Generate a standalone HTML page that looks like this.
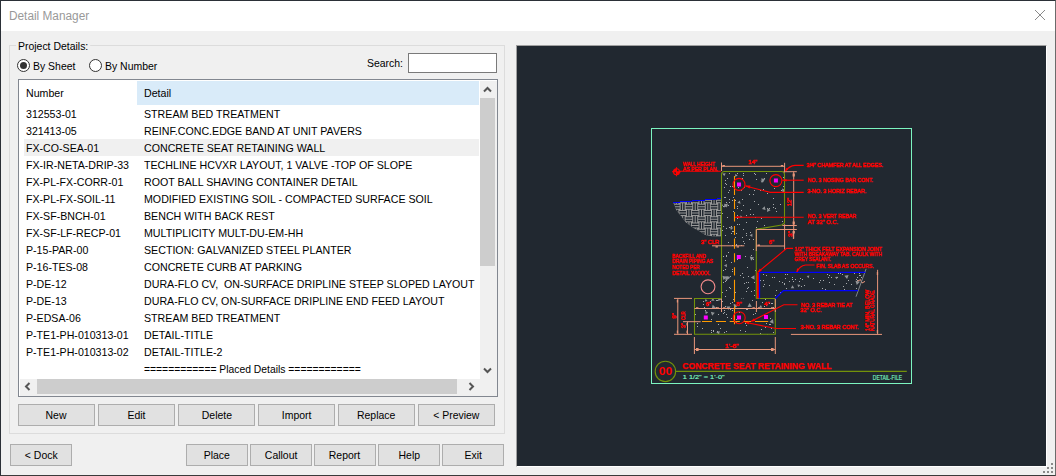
<!DOCTYPE html>
<html><head><meta charset="utf-8">
<style>
html,body{margin:0;padding:0;}
body{width:1056px;height:476px;overflow:hidden;background:#f0f0f0;position:relative;font-family:"Liberation Sans",sans-serif;font-size:11px;color:#000;}
.abs{position:absolute;}
#win{position:absolute;left:0;top:0;width:1054px;height:474px;border-left:1px solid #2b3037;border-top:1px solid #2b3037;border-right:1px solid #6b6b6b;border-bottom:1px solid #3a3a3a;background:#f0f0f0;}
#title{position:absolute;left:1px;top:1px;width:1054px;height:30px;background:#fff;}
#title span{position:absolute;left:8px;top:8px;font-size:12px;color:#999;display:inline-block;transform:scaleX(.985);transform-origin:0 0;white-space:nowrap;}
#grp{position:absolute;left:9px;top:45px;width:494px;height:387px;border:1px solid #dcdcdc;}
#legend{position:absolute;left:16px;top:39.5px;background:#f0f0f0;padding:0 2px;line-height:13px;transform:scale(.95,1.05);transform-origin:2px 10px;}
.radio{position:absolute;width:11px;height:11px;border:1px solid #333;border-radius:50%;background:#fff;}
.radio.on::after{content:"";position:absolute;left:2px;top:2px;width:7px;height:7px;border-radius:50%;background:#333;}
.lbl{position:absolute;line-height:13px;white-space:nowrap;transform:scale(.95,1.05);transform-origin:0 10px;}
#search{position:absolute;left:408px;top:53px;width:87px;height:18px;border:1px solid #7a7a7a;background:#fff;}
#list{position:absolute;left:18px;top:79px;width:478px;height:316px;border:1px solid #828790;background:#fff;overflow:hidden;}
#hdr2{position:absolute;left:118px;top:1px;width:342px;height:24px;background:#d9ebf9;}
.row{position:absolute;left:5px;width:455px;height:17px;line-height:17px;white-space:nowrap;}
.row.sel{background:#f0f0f0;}
.row i{font-style:normal;position:absolute;left:2px;top:1px;transform:scale(.965,1.05);transform-origin:0 12.5px;}
.row b{font-weight:normal;position:absolute;left:119.5px;top:1px;transform:scale(.968,1.05);transform-origin:0 12.5px;}
.btn{position:absolute;height:20px;border:1px solid #adadad;background:#e1e1e1;text-align:center;line-height:21px;}
.btn span{display:inline-block;transform:scale(.95,1.05);transform-origin:50% 14.5px;}
#prev{position:absolute;left:516px;top:45px;width:529px;height:420px;background:#212830;border-left:1px solid #a0a0a0;border-top:1px solid #a0a0a0;border-right:1px solid #fff;border-bottom:1px solid #fff;}
</style></head><body>
<div id="win"></div>
<div id="title"><span>Detail Manager</span></div>
<svg class="abs" style="left:1034px;top:9px" width="12" height="12" viewBox="0 0 12 12"><path d="M1 1L11 11M11 1L1 11" stroke="#8a8a8a" stroke-width="1" fill="none"/></svg>
<div id="grp"></div>
<div id="legend">Project Details:</div>
<div class="radio on" style="left:17px;top:59px"></div><div class="lbl" style="left:33px;top:60px">By Sheet</div>
<div class="radio" style="left:89px;top:59px"></div><div class="lbl" style="left:105px;top:60px">By Number</div>
<div class="lbl" style="left:367px;top:57px">Search:</div>
<div id="search"></div>
<div id="list">
<div id="hdr2"></div>
<div class="row" style="top:4px"><i>Number</i><b>Detail</b></div>
<div class="row" style="top:25px"><i>312553-01</i><b>STREAM BED TREATMENT</b></div>
<div class="row" style="top:42px"><i>321413-05</i><b>REINF.CONC.EDGE BAND AT UNIT PAVERS</b></div>
<div class="row sel" style="top:59px"><i>FX-CO-SEA-01</i><b>CONCRETE SEAT RETAINING WALL</b></div>
<div class="row" style="top:76px"><i>FX-IR-NETA-DRIP-33</i><b>TECHLINE HCVXR LAYOUT, 1 VALVE -TOP OF SLOPE</b></div>
<div class="row" style="top:93px"><i>FX-PL-FX-CORR-01</i><b>ROOT BALL SHAVING CONTAINER DETAIL</b></div>
<div class="row" style="top:110px"><i>FX-PL-FX-SOIL-11</i><b>MODIFIED EXISTING SOIL - COMPACTED SURFACE SOIL</b></div>
<div class="row" style="top:127px"><i>FX-SF-BNCH-01</i><b>BENCH WITH BACK REST</b></div>
<div class="row" style="top:144px"><i>FX-SF-LF-RECP-01</i><b>MULTIPLICITY MULT-DU-EM-HH</b></div>
<div class="row" style="top:161px"><i>P-15-PAR-00</i><b>SECTION: GALVANIZED STEEL PLANTER</b></div>
<div class="row" style="top:178px"><i>P-16-TES-08</i><b>CONCRETE CURB AT PARKING</b></div>
<div class="row" style="top:195px"><i>P-DE-12</i><b>DURA-FLO CV,&nbsp; ON-SURFACE DRIPLINE STEEP SLOPED LAYOUT</b></div>
<div class="row" style="top:212px"><i>P-DE-13</i><b>DURA-FLO CV, ON-SURFACE DRIPLINE END FEED LAYOUT</b></div>
<div class="row" style="top:229px"><i>P-EDSA-06</i><b>STREAM BED TREATMENT</b></div>
<div class="row" style="top:246px"><i>P-TE1-PH-010313-01</i><b>DETAIL-TITLE</b></div>
<div class="row" style="top:263px"><i>P-TE1-PH-010313-02</i><b>DETAIL-TITLE-2</b></div>
<div class="row" style="top:280px"><i></i><b style="transform:scale(.94,1.05)">============ Placed Details ============</b></div>
<div class="abs" style="left:461px;top:1px;width:17px;height:298px;background:#f0f0f0"></div>
<div class="abs" style="left:461px;top:18px;width:15px;height:168px;background:#cdcdcd"></div>
<div class="abs" style="left:1px;top:299px;width:477px;height:17px;background:#f0f0f0"></div>
<div class="abs" style="left:18px;top:299px;width:420px;height:15px;background:#cdcdcd"></div>
<svg class="abs" style="left:460px;top:0px" width="17" height="17"><path d="M5 11.5L8.5 8L12 11.5" stroke="#555" stroke-width="2" fill="none"/></svg>
<svg class="abs" style="left:460px;top:281px" width="17" height="17"><path d="M5 7.5L8.5 11L12 7.5" stroke="#555" stroke-width="2" fill="none"/></svg>
<svg class="abs" style="left:0px;top:298px" width="17" height="17"><path d="M10.5 5L7 8.5L10.5 12" stroke="#555" stroke-width="2" fill="none"/></svg>
<svg class="abs" style="left:443px;top:298px" width="17" height="17"><path d="M7.5 5L11 8.5L7.5 12" stroke="#555" stroke-width="2" fill="none"/></svg>
</div>
<div class="btn" style="left:18px;top:404px;width:75px"><span>New</span></div>
<div class="btn" style="left:98px;top:404px;width:75px"><span>Edit</span></div>
<div class="btn" style="left:178px;top:404px;width:75px"><span>Delete</span></div>
<div class="btn" style="left:258px;top:404px;width:75px"><span>Import</span></div>
<div class="btn" style="left:338px;top:404px;width:75px"><span>Replace</span></div>
<div class="btn" style="left:418px;top:404px;width:75px"><span>&lt; Preview</span></div>
<div class="btn" style="left:10px;top:444px;width:60px"><span>&lt; Dock</span></div>
<div class="btn" style="left:186px;top:444px;width:60px"><span>Place</span></div>
<div class="btn" style="left:250px;top:444px;width:60px"><span>Callout</span></div>
<div class="btn" style="left:314px;top:444px;width:60px"><span>Report</span></div>
<div class="btn" style="left:378px;top:444px;width:60px"><span>Help</span></div>
<div class="btn" style="left:442px;top:444px;width:60px"><span>Exit</span></div>
<svg class="abs" style="left:1040px;top:460px" width="14" height="14"><path d="M11 3h2v2h-2zM7 7h2v2h-2zM11 7h2v2h-2zM3 11h2v2h-2zM7 11h2v2h-2zM11 11h2v2h-2z" fill="#8a8a8a" shape-rendering="crispEdges"/></svg>
<div id="prev"></div>
<!--CAD-->
<svg id="cad" class="abs" style="left:516px;top:45px" width="530" height="421" viewBox="516 45 530 421" font-family="&quot;Liberation Sans&quot;,sans-serif">
<defs>
<clipPath id="cw"><path d="M721.5 171.5H784.5V223L781.7 225L756.3 229.3V298.5H721.5Z"/></clipPath>
<clipPath id="cf"><path d="M694.5 298.5H775.3V334.3H694.5Z"/></clipPath>
<clipPath id="cs"><path d="M759.5 272.4H865.2L858.5 290.6H783.5L775.3 298.5H759.5Z"/></clipPath>
</defs>
<rect x="651.5" y="128.5" width="260" height="255" fill="none" stroke="#7cf5c0" stroke-width="1"/>
<clipPath id="ch"><path d="M673.3 202.8L674.7 206L676 209.4L678 212.4L680.2 215L685.7 222.2L693.9 228.2L699.9 231.5L705.3 235L712 236.3L721 236.5V198.8Z"/></clipPath>
<g clip-path="url(#ch)">
<rect x="672" y="197" width="50" height="41" fill="#999999"/>
<path d="M661.81 184.45h1.5v6.60h-1.5zM664.31 184.45h1.5v6.60h-1.5zM660.51 192.05h6.60v1.5h-6.60zM660.51 194.55h6.60v1.5h-6.60zM661.81 197.05h1.5v6.60h-1.5zM664.31 197.05h1.5v6.60h-1.5zM660.51 204.65h6.60v1.5h-6.60zM660.51 207.15h6.60v1.5h-6.60zM661.81 209.65h1.5v6.60h-1.5zM664.31 209.65h1.5v6.60h-1.5zM660.51 217.25h6.60v1.5h-6.60zM660.51 219.75h6.60v1.5h-6.60zM661.81 222.25h1.5v6.60h-1.5zM664.31 222.25h1.5v6.60h-1.5zM660.51 229.85h6.60v1.5h-6.60zM660.51 232.35h6.60v1.5h-6.60zM661.81 234.85h1.5v6.60h-1.5zM664.31 234.85h1.5v6.60h-1.5zM660.51 242.45h6.60v1.5h-6.60zM660.51 244.95h6.60v1.5h-6.60zM661.81 247.45h1.5v6.60h-1.5zM664.31 247.45h1.5v6.60h-1.5zM666.79 185.75h6.60v1.5h-6.60zM666.79 188.25h6.60v1.5h-6.60zM668.09 190.75h1.5v6.60h-1.5zM670.59 190.75h1.5v6.60h-1.5zM666.79 198.35h6.60v1.5h-6.60zM666.79 200.85h6.60v1.5h-6.60zM668.09 203.35h1.5v6.60h-1.5zM670.59 203.35h1.5v6.60h-1.5zM666.79 210.95h6.60v1.5h-6.60zM666.79 213.45h6.60v1.5h-6.60zM668.09 215.95h1.5v6.60h-1.5zM670.59 215.95h1.5v6.60h-1.5zM666.79 223.55h6.60v1.5h-6.60zM666.79 226.05h6.60v1.5h-6.60zM668.09 228.55h1.5v6.60h-1.5zM670.59 228.55h1.5v6.60h-1.5zM666.79 236.15h6.60v1.5h-6.60zM666.79 238.65h6.60v1.5h-6.60zM668.09 241.15h1.5v6.60h-1.5zM670.59 241.15h1.5v6.60h-1.5zM666.79 248.75h6.60v1.5h-6.60zM666.79 251.25h6.60v1.5h-6.60zM674.37 184.45h1.5v6.60h-1.5zM676.87 184.45h1.5v6.60h-1.5zM673.07 192.05h6.60v1.5h-6.60zM673.07 194.55h6.60v1.5h-6.60zM674.37 197.05h1.5v6.60h-1.5zM676.87 197.05h1.5v6.60h-1.5zM673.07 204.65h6.60v1.5h-6.60zM673.07 207.15h6.60v1.5h-6.60zM674.37 209.65h1.5v6.60h-1.5zM676.87 209.65h1.5v6.60h-1.5zM673.07 217.25h6.60v1.5h-6.60zM673.07 219.75h6.60v1.5h-6.60zM674.37 222.25h1.5v6.60h-1.5zM676.87 222.25h1.5v6.60h-1.5zM673.07 229.85h6.60v1.5h-6.60zM673.07 232.35h6.60v1.5h-6.60zM674.37 234.85h1.5v6.60h-1.5zM676.87 234.85h1.5v6.60h-1.5zM673.07 242.45h6.60v1.5h-6.60zM673.07 244.95h6.60v1.5h-6.60zM674.37 247.45h1.5v6.60h-1.5zM676.87 247.45h1.5v6.60h-1.5zM679.35 185.75h6.60v1.5h-6.60zM679.35 188.25h6.60v1.5h-6.60zM680.65 190.75h1.5v6.60h-1.5zM683.15 190.75h1.5v6.60h-1.5zM679.35 198.35h6.60v1.5h-6.60zM679.35 200.85h6.60v1.5h-6.60zM680.65 203.35h1.5v6.60h-1.5zM683.15 203.35h1.5v6.60h-1.5zM679.35 210.95h6.60v1.5h-6.60zM679.35 213.45h6.60v1.5h-6.60zM680.65 215.95h1.5v6.60h-1.5zM683.15 215.95h1.5v6.60h-1.5zM679.35 223.55h6.60v1.5h-6.60zM679.35 226.05h6.60v1.5h-6.60zM680.65 228.55h1.5v6.60h-1.5zM683.15 228.55h1.5v6.60h-1.5zM679.35 236.15h6.60v1.5h-6.60zM679.35 238.65h6.60v1.5h-6.60zM680.65 241.15h1.5v6.60h-1.5zM683.15 241.15h1.5v6.60h-1.5zM679.35 248.75h6.60v1.5h-6.60zM679.35 251.25h6.60v1.5h-6.60zM686.93 184.45h1.5v6.60h-1.5zM689.43 184.45h1.5v6.60h-1.5zM685.63 192.05h6.60v1.5h-6.60zM685.63 194.55h6.60v1.5h-6.60zM686.93 197.05h1.5v6.60h-1.5zM689.43 197.05h1.5v6.60h-1.5zM685.63 204.65h6.60v1.5h-6.60zM685.63 207.15h6.60v1.5h-6.60zM686.93 209.65h1.5v6.60h-1.5zM689.43 209.65h1.5v6.60h-1.5zM685.63 217.25h6.60v1.5h-6.60zM685.63 219.75h6.60v1.5h-6.60zM686.93 222.25h1.5v6.60h-1.5zM689.43 222.25h1.5v6.60h-1.5zM685.63 229.85h6.60v1.5h-6.60zM685.63 232.35h6.60v1.5h-6.60zM686.93 234.85h1.5v6.60h-1.5zM689.43 234.85h1.5v6.60h-1.5zM685.63 242.45h6.60v1.5h-6.60zM685.63 244.95h6.60v1.5h-6.60zM686.93 247.45h1.5v6.60h-1.5zM689.43 247.45h1.5v6.60h-1.5zM691.91 185.75h6.60v1.5h-6.60zM691.91 188.25h6.60v1.5h-6.60zM693.21 190.75h1.5v6.60h-1.5zM695.71 190.75h1.5v6.60h-1.5zM691.91 198.35h6.60v1.5h-6.60zM691.91 200.85h6.60v1.5h-6.60zM693.21 203.35h1.5v6.60h-1.5zM695.71 203.35h1.5v6.60h-1.5zM691.91 210.95h6.60v1.5h-6.60zM691.91 213.45h6.60v1.5h-6.60zM693.21 215.95h1.5v6.60h-1.5zM695.71 215.95h1.5v6.60h-1.5zM691.91 223.55h6.60v1.5h-6.60zM691.91 226.05h6.60v1.5h-6.60zM693.21 228.55h1.5v6.60h-1.5zM695.71 228.55h1.5v6.60h-1.5zM691.91 236.15h6.60v1.5h-6.60zM691.91 238.65h6.60v1.5h-6.60zM693.21 241.15h1.5v6.60h-1.5zM695.71 241.15h1.5v6.60h-1.5zM691.91 248.75h6.60v1.5h-6.60zM691.91 251.25h6.60v1.5h-6.60zM699.49 184.45h1.5v6.60h-1.5zM701.99 184.45h1.5v6.60h-1.5zM698.19 192.05h6.60v1.5h-6.60zM698.19 194.55h6.60v1.5h-6.60zM699.49 197.05h1.5v6.60h-1.5zM701.99 197.05h1.5v6.60h-1.5zM698.19 204.65h6.60v1.5h-6.60zM698.19 207.15h6.60v1.5h-6.60zM699.49 209.65h1.5v6.60h-1.5zM701.99 209.65h1.5v6.60h-1.5zM698.19 217.25h6.60v1.5h-6.60zM698.19 219.75h6.60v1.5h-6.60zM699.49 222.25h1.5v6.60h-1.5zM701.99 222.25h1.5v6.60h-1.5zM698.19 229.85h6.60v1.5h-6.60zM698.19 232.35h6.60v1.5h-6.60zM699.49 234.85h1.5v6.60h-1.5zM701.99 234.85h1.5v6.60h-1.5zM698.19 242.45h6.60v1.5h-6.60zM698.19 244.95h6.60v1.5h-6.60zM699.49 247.45h1.5v6.60h-1.5zM701.99 247.45h1.5v6.60h-1.5zM704.47 185.75h6.60v1.5h-6.60zM704.47 188.25h6.60v1.5h-6.60zM705.77 190.75h1.5v6.60h-1.5zM708.27 190.75h1.5v6.60h-1.5zM704.47 198.35h6.60v1.5h-6.60zM704.47 200.85h6.60v1.5h-6.60zM705.77 203.35h1.5v6.60h-1.5zM708.27 203.35h1.5v6.60h-1.5zM704.47 210.95h6.60v1.5h-6.60zM704.47 213.45h6.60v1.5h-6.60zM705.77 215.95h1.5v6.60h-1.5zM708.27 215.95h1.5v6.60h-1.5zM704.47 223.55h6.60v1.5h-6.60zM704.47 226.05h6.60v1.5h-6.60zM705.77 228.55h1.5v6.60h-1.5zM708.27 228.55h1.5v6.60h-1.5zM704.47 236.15h6.60v1.5h-6.60zM704.47 238.65h6.60v1.5h-6.60zM705.77 241.15h1.5v6.60h-1.5zM708.27 241.15h1.5v6.60h-1.5zM704.47 248.75h6.60v1.5h-6.60zM704.47 251.25h6.60v1.5h-6.60zM712.05 184.45h1.5v6.60h-1.5zM714.55 184.45h1.5v6.60h-1.5zM710.75 192.05h6.60v1.5h-6.60zM710.75 194.55h6.60v1.5h-6.60zM712.05 197.05h1.5v6.60h-1.5zM714.55 197.05h1.5v6.60h-1.5zM710.75 204.65h6.60v1.5h-6.60zM710.75 207.15h6.60v1.5h-6.60zM712.05 209.65h1.5v6.60h-1.5zM714.55 209.65h1.5v6.60h-1.5zM710.75 217.25h6.60v1.5h-6.60zM710.75 219.75h6.60v1.5h-6.60zM712.05 222.25h1.5v6.60h-1.5zM714.55 222.25h1.5v6.60h-1.5zM710.75 229.85h6.60v1.5h-6.60zM710.75 232.35h6.60v1.5h-6.60zM712.05 234.85h1.5v6.60h-1.5zM714.55 234.85h1.5v6.60h-1.5zM710.75 242.45h6.60v1.5h-6.60zM710.75 244.95h6.60v1.5h-6.60zM712.05 247.45h1.5v6.60h-1.5zM714.55 247.45h1.5v6.60h-1.5zM717.03 185.75h6.60v1.5h-6.60zM717.03 188.25h6.60v1.5h-6.60zM718.33 190.75h1.5v6.60h-1.5zM720.83 190.75h1.5v6.60h-1.5zM717.03 198.35h6.60v1.5h-6.60zM717.03 200.85h6.60v1.5h-6.60zM718.33 203.35h1.5v6.60h-1.5zM720.83 203.35h1.5v6.60h-1.5zM717.03 210.95h6.60v1.5h-6.60zM717.03 213.45h6.60v1.5h-6.60zM718.33 215.95h1.5v6.60h-1.5zM720.83 215.95h1.5v6.60h-1.5zM717.03 223.55h6.60v1.5h-6.60zM717.03 226.05h6.60v1.5h-6.60zM718.33 228.55h1.5v6.60h-1.5zM720.83 228.55h1.5v6.60h-1.5zM717.03 236.15h6.60v1.5h-6.60zM717.03 238.65h6.60v1.5h-6.60zM718.33 241.15h1.5v6.60h-1.5zM720.83 241.15h1.5v6.60h-1.5zM717.03 248.75h6.60v1.5h-6.60zM717.03 251.25h6.60v1.5h-6.60zM724.61 184.45h1.5v6.60h-1.5zM727.11 184.45h1.5v6.60h-1.5zM723.31 192.05h6.60v1.5h-6.60zM723.31 194.55h6.60v1.5h-6.60zM724.61 197.05h1.5v6.60h-1.5zM727.11 197.05h1.5v6.60h-1.5zM723.31 204.65h6.60v1.5h-6.60zM723.31 207.15h6.60v1.5h-6.60zM724.61 209.65h1.5v6.60h-1.5zM727.11 209.65h1.5v6.60h-1.5zM723.31 217.25h6.60v1.5h-6.60zM723.31 219.75h6.60v1.5h-6.60zM724.61 222.25h1.5v6.60h-1.5zM727.11 222.25h1.5v6.60h-1.5zM723.31 229.85h6.60v1.5h-6.60zM723.31 232.35h6.60v1.5h-6.60zM724.61 234.85h1.5v6.60h-1.5zM727.11 234.85h1.5v6.60h-1.5zM723.31 242.45h6.60v1.5h-6.60zM723.31 244.95h6.60v1.5h-6.60zM724.61 247.45h1.5v6.60h-1.5zM727.11 247.45h1.5v6.60h-1.5zM729.59 185.75h6.60v1.5h-6.60zM729.59 188.25h6.60v1.5h-6.60zM730.89 190.75h1.5v6.60h-1.5zM733.39 190.75h1.5v6.60h-1.5zM729.59 198.35h6.60v1.5h-6.60zM729.59 200.85h6.60v1.5h-6.60zM730.89 203.35h1.5v6.60h-1.5zM733.39 203.35h1.5v6.60h-1.5zM729.59 210.95h6.60v1.5h-6.60zM729.59 213.45h6.60v1.5h-6.60zM730.89 215.95h1.5v6.60h-1.5zM733.39 215.95h1.5v6.60h-1.5zM729.59 223.55h6.60v1.5h-6.60zM729.59 226.05h6.60v1.5h-6.60zM730.89 228.55h1.5v6.60h-1.5zM733.39 228.55h1.5v6.60h-1.5zM729.59 236.15h6.60v1.5h-6.60zM729.59 238.65h6.60v1.5h-6.60zM730.89 241.15h1.5v6.60h-1.5zM733.39 241.15h1.5v6.60h-1.5zM729.59 248.75h6.60v1.5h-6.60zM729.59 251.25h6.60v1.5h-6.60zM737.17 184.45h1.5v6.60h-1.5zM739.67 184.45h1.5v6.60h-1.5zM735.87 192.05h6.60v1.5h-6.60zM735.87 194.55h6.60v1.5h-6.60zM737.17 197.05h1.5v6.60h-1.5zM739.67 197.05h1.5v6.60h-1.5zM735.87 204.65h6.60v1.5h-6.60zM735.87 207.15h6.60v1.5h-6.60zM737.17 209.65h1.5v6.60h-1.5zM739.67 209.65h1.5v6.60h-1.5zM735.87 217.25h6.60v1.5h-6.60zM735.87 219.75h6.60v1.5h-6.60zM737.17 222.25h1.5v6.60h-1.5zM739.67 222.25h1.5v6.60h-1.5zM735.87 229.85h6.60v1.5h-6.60zM735.87 232.35h6.60v1.5h-6.60zM737.17 234.85h1.5v6.60h-1.5zM739.67 234.85h1.5v6.60h-1.5zM735.87 242.45h6.60v1.5h-6.60zM735.87 244.95h6.60v1.5h-6.60zM737.17 247.45h1.5v6.60h-1.5zM739.67 247.45h1.5v6.60h-1.5z" fill="#212830"/>
</g>
<path d="M673.4 202.5L721 198.7" stroke="#0000ff" stroke-width="1" fill="none" shape-rendering="crispEdges"/>
<g clip-path="url(#cw)">
<path d="M741 190h1v1h-1zM762 180h1v1h-1zM755 217h1v1h-1zM725 235h1v1h-1zM723 226h1v1h-1zM725 183h1v1h-1zM748 276h1v1h-1zM729 199h1v1h-1zM761 291h1v1h-1zM757 221h1v1h-1zM783 177h1v1h-1zM775 208h1v1h-1zM730 186h1v1h-1zM740 275h1v1h-1zM732 245h1v1h-1zM761 218h1v1h-1zM756 179h1v1h-1zM725 197h1v1h-1zM764 225h1v1h-1zM741 245h1v1h-1zM750 209h1v1h-1zM771 260h1v1h-1zM736 244h1v1h-1zM754 282h1v1h-1zM767 208h1v1h-1zM783 186h1v1h-1zM747 267h1v1h-1zM731 233h1v1h-1zM723 256h1v1h-1zM769 244h1v1h-1zM776 211h1v1h-1zM765 246h1v1h-1zM758 229h1v1h-1zM774 291h1v1h-1zM751 255h1v1h-1zM725 260h1v1h-1zM762 297h1v1h-1zM773 207h1v1h-1zM745 256h1v1h-1zM722 230h1v1h-1zM732 186h1v1h-1zM725 269h1v1h-1zM729 202h1v1h-1zM746 282h1v1h-1zM726 228h1v1h-1zM756 283h1v1h-1zM773 281h1v1h-1zM739 224h1v1h-1zM744 283h1v1h-1zM781 190h1v1h-1zM732 200h1v1h-1zM736 233h1v1h-1zM758 204h1v1h-1zM721 224h1v1h-1zM744 243h1v1h-1zM781 259h1v1h-1zM753 249h1v1h-1zM764 178h1v1h-1zM778 270h1v1h-1zM776 272h1v1h-1zM746 222h1v1h-1zM728 252h1v1h-1zM725 180h1v1h-1zM734 192h1v1h-1zM742 178h1v1h-1zM721 190h1v1h-1zM727 217h1v1h-1zM723 282h1v1h-1zM760 190h1v1h-1zM737 215h1v1h-1zM744 187h1v1h-1zM774 297h1v1h-1zM750 232h1v1h-1zM726 184h1v1h-1zM743 205h1v1h-1zM773 192h1v1h-1zM722 292h1v1h-1zM754 190h1v1h-1zM755 174h1v1h-1zM754 295h1v1h-1zM775 259h1v1h-1zM737 218h1v1h-1zM732 269h1v1h-1zM755 270h1v1h-1zM742 199h1v1h-1zM772 296h1v1h-1zM775 273h1v1h-1zM773 265h1v1h-1zM735 237h1v1h-1zM743 175h1v1h-1zM723 206h1v1h-1zM737 259h1v1h-1zM781 228h1v1h-1zM780 296h1v1h-1zM781 217h1v1h-1zM735 200h1v1h-1zM733 197h1v1h-1zM760 285h1v1h-1zM774 232h1v1h-1zM762 273h1v1h-1zM726 255h1v1h-1zM778 270h1v1h-1zM768 232h1v1h-1zM732 271h1v1h-1zM742 273h1v1h-1zM782 221h1v1h-1zM746 291h1v1h-1zM767 193h1v1h-1zM729 190h1v1h-1zM778 273h1v1h-1zM730 276h1v1h-1zM783 254h1v1h-1zM743 241h1v1h-1zM729 173h1v1h-1zM782 254h1v1h-1zM754 290h1v1h-1zM748 282h1v1h-1zM773 198h1v1h-1zM737 208h1v1h-1zM736 245h1v1h-1zM737 224h1v1h-1zM729 287h1v1h-1zM743 229h1v1h-1zM758 286h1v1h-1zM747 288h1v1h-1zM753 239h1v1h-1zM754 173h1v1h-1zM749 194h1v1h-1zM721 272h1v1h-1zM732 231h1v1h-1zM767 242h1v1h-1zM742 237h1v1h-1zM756 271h1v1h-1zM728 242h1v1h-1zM737 206h1v1h-1zM770 235h1v1h-1zM756 268h1v1h-1zM778 227h1v1h-1zM760 235h1v1h-1zM753 259h1v1h-1zM749 239h1v1h-1zM751 291h1v1h-1zM765 282h1v1h-1zM780 204h1v1h-1zM756 291h1v1h-1zM774 188h1v1h-1zM729 227h1v1h-1zM726 202h1v1h-1zM726 256h1v1h-1zM770 285h1v1h-1zM731 262h1v1h-1zM763 189h1v1h-1zM777 294h1v1h-1zM735 292h1v1h-1zM746 233h1v1h-1zM783 277h1v1h-1zM731 226h1v1h-1zM753 214h1v1h-1zM733 211h1v1h-1zM766 173h1v1h-1zM756 227h1v1h-1zM722 213h1v1h-1zM760 236h1v1h-1zM725 296h1v1h-1zM771 294h1v1h-1zM728 205h1v1h-1zM723 270h1v1h-1zM738 187h1v1h-1zM748 287h1v1h-1zM773 204h1v1h-1zM730 288h1v1h-1zM757 260h1v1h-1zM727 178h1v1h-1zM764 225h1v1h-1zM726 290h1v1h-1zM761 273h1v1h-1zM726 280h1v1h-1zM725 281h1v1h-1zM750 214h1v1h-1zM756 289h1v1h-1zM738 187h1v1h-1zM754 201h1v1h-1zM728 192h1v1h-1zM724 197h1v1h-1zM741 210h1v1h-1zM769 208h1v1h-1zM753 194h1v1h-1zM743 173h1v1h-1zM737 173h1v1h-1zM767 241h1v1h-1zM733 231h1v1h-1zM780 184h1v1h-1zM773 226h1v1h-1zM752 277h1v1h-1zM746 235h1v1h-1zM764 296h1v1h-1zM743 277h1v1h-1zM766 252h1v1h-1zM746 215h1v1h-1zM724 187h1v1h-1z" fill="#a8abae" shape-rendering="crispEdges"/>
<path d="M726.9 267.2L724.0 265.6L726.9 263.9ZM725.6 276.0L729.5 278.4L725.4 280.6ZM737.4 202.8L739.8 200.4L740.6 203.7ZM733.3 227.7L730.9 230.0L730.1 226.7ZM784.6 240.6L782.2 242.8L781.5 239.6ZM739.8 217.9L740.7 215.2L742.5 217.3ZM749.6 235.3L752.4 233.8L752.3 237.0ZM720.4 206.1L721.6 203.4L723.4 205.8ZM724.3 176.3L722.3 173.6L725.7 173.2ZM757.0 236.6L760.9 238.6L757.2 240.9ZM765.7 285.0L765.5 281.4L768.7 283.1ZM782.0 188.6L786.0 190.1L782.6 192.8ZM722.4 275.7L726.9 276.9L723.5 280.1ZM766.0 274.4L768.8 273.3L768.4 276.3ZM754.5 275.3L754.6 279.7L750.7 277.6ZM757.4 282.6L760.7 285.3L756.7 286.7ZM734.9 176.8L735.4 173.8L737.7 175.8ZM726.5 276.0L730.3 277.1L727.5 279.8ZM763.1 258.0L759.8 259.8L759.9 256.0ZM769.6 266.0L773.3 264.9L772.4 268.6ZM763.0 182.4L760.9 178.6L765.2 178.7ZM726.9 207.6L723.8 204.6L727.9 203.5ZM766.5 296.9L767.7 293.3L770.2 296.1ZM749.8 256.6L754.1 257.6L751.1 260.8ZM762.0 183.1L760.5 180.4L763.6 180.5ZM770.6 210.3L767.0 212.0L767.4 208.1ZM724.5 203.4L727.7 206.0L723.8 207.5ZM761.9 208.9L764.7 206.3L765.6 210.1Z" fill="#8f9396"/>
</g>
<g clip-path="url(#cf)">
<path d="M732 302h1v1h-1zM766 305h1v1h-1zM773 332h1v1h-1zM695 314h1v1h-1zM760 333h1v1h-1zM730 308h1v1h-1zM711 332h1v1h-1zM711 319h1v1h-1zM705 317h1v1h-1zM771 303h1v1h-1zM760 316h1v1h-1zM766 323h1v1h-1zM713 330h1v1h-1zM733 299h1v1h-1zM694 316h1v1h-1zM730 309h1v1h-1zM705 310h1v1h-1zM720 328h1v1h-1zM694 325h1v1h-1zM762 302h1v1h-1zM769 324h1v1h-1zM767 308h1v1h-1zM724 312h1v1h-1zM775 319h1v1h-1zM723 313h1v1h-1zM716 300h1v1h-1zM702 328h1v1h-1zM717 331h1v1h-1zM714 308h1v1h-1zM735 305h1v1h-1zM724 332h1v1h-1zM765 327h1v1h-1zM745 331h1v1h-1zM770 318h1v1h-1zM752 300h1v1h-1zM753 314h1v1h-1zM755 321h1v1h-1zM717 300h1v1h-1zM769 303h1v1h-1zM732 310h1v1h-1zM718 324h1v1h-1zM773 307h1v1h-1zM747 309h1v1h-1zM739 312h1v1h-1zM708 304h1v1h-1zM711 330h1v1h-1zM734 306h1v1h-1zM767 334h1v1h-1zM730 303h1v1h-1zM710 301h1v1h-1zM722 301h1v1h-1zM713 307h1v1h-1zM740 330h1v1h-1zM755 313h1v1h-1zM727 317h1v1h-1zM724 310h1v1h-1zM699 308h1v1h-1zM772 303h1v1h-1zM735 321h1v1h-1zM764 306h1v1h-1zM716 307h1v1h-1zM726 314h1v1h-1zM771 328h1v1h-1zM765 299h1v1h-1zM697 323h1v1h-1zM766 315h1v1h-1zM741 298h1v1h-1zM726 331h1v1h-1zM761 329h1v1h-1zM773 307h1v1h-1zM703 304h1v1h-1zM736 322h1v1h-1zM770 324h1v1h-1zM746 325h1v1h-1zM731 318h1v1h-1zM697 326h1v1h-1zM713 331h1v1h-1zM746 309h1v1h-1zM704 307h1v1h-1zM745 323h1v1h-1zM703 301h1v1h-1zM736 319h1v1h-1zM725 306h1v1h-1zM743 298h1v1h-1zM718 314h1v1h-1z" fill="#a8abae" shape-rendering="crispEdges"/>
<path d="M769.4 322.0L773.0 319.1L773.6 323.7ZM712.7 304.7L716.1 308.0L711.6 309.3ZM718.3 297.3L721.5 299.4L718.1 301.1ZM730.6 306.6L728.3 310.1L726.4 306.4ZM711.1 300.7L712.9 297.7L714.5 300.8ZM749.5 303.0L751.9 306.7L747.5 307.0ZM734.3 308.4L733.6 303.7L738.0 305.5ZM760.9 304.9L762.3 307.8L759.1 307.6ZM719.2 334.6L716.2 332.3L719.7 330.9ZM714.8 312.7L712.1 315.8L710.8 311.8ZM708.2 312.3L705.7 314.3L705.2 311.1ZM704.7 301.4L705.7 298.7L707.5 301.0Z" fill="#8f9396"/>
</g>
<g clip-path="url(#cs)">
<path d="M854 295h1v1h-1zM836 298h1v1h-1zM857 280h1v1h-1zM779 296h1v1h-1zM838 273h1v1h-1zM829 282h1v1h-1zM799 281h1v1h-1zM777 272h1v1h-1zM789 281h1v1h-1zM860 275h1v1h-1zM861 277h1v1h-1zM797 293h1v1h-1zM846 283h1v1h-1zM764 284h1v1h-1zM798 296h1v1h-1zM779 281h1v1h-1zM854 273h1v1h-1zM802 293h1v1h-1zM840 273h1v1h-1zM763 274h1v1h-1zM856 279h1v1h-1zM838 295h1v1h-1zM795 279h1v1h-1zM860 288h1v1h-1zM787 291h1v1h-1zM792 279h1v1h-1zM759 292h1v1h-1zM856 288h1v1h-1zM859 273h1v1h-1zM784 284h1v1h-1zM860 297h1v1h-1zM800 278h1v1h-1zM804 285h1v1h-1zM857 277h1v1h-1zM844 291h1v1h-1zM846 292h1v1h-1zM823 280h1v1h-1zM793 281h1v1h-1zM842 274h1v1h-1zM780 292h1v1h-1zM785 274h1v1h-1zM763 286h1v1h-1zM793 297h1v1h-1zM852 298h1v1h-1zM787 274h1v1h-1zM769 285h1v1h-1zM834 284h1v1h-1zM784 283h1v1h-1zM825 289h1v1h-1zM838 294h1v1h-1zM829 275h1v1h-1zM848 280h1v1h-1zM819 282h1v1h-1zM837 277h1v1h-1zM785 278h1v1h-1zM775 295h1v1h-1zM820 280h1v1h-1zM801 298h1v1h-1zM813 278h1v1h-1zM844 289h1v1h-1zM864 275h1v1h-1zM809 293h1v1h-1zM848 296h1v1h-1zM763 280h1v1h-1zM772 277h1v1h-1zM862 287h1v1h-1zM857 282h1v1h-1zM851 284h1v1h-1zM786 292h1v1h-1zM859 275h1v1h-1zM822 288h1v1h-1zM782 282h1v1h-1zM774 277h1v1h-1zM786 288h1v1h-1zM828 277h1v1h-1zM760 280h1v1h-1zM831 277h1v1h-1zM792 277h1v1h-1zM843 286h1v1h-1zM766 275h1v1h-1zM801 286h1v1h-1zM827 274h1v1h-1zM776 290h1v1h-1zM802 279h1v1h-1zM792 297h1v1h-1z" fill="#a8abae" shape-rendering="crispEdges"/>
<path d="M790.8 288.2L792.5 285.2L794.3 288.2ZM851.5 300.3L848.9 298.0L852.2 296.9ZM837.8 276.8L836.6 279.3L835.0 277.0ZM805.8 292.4L804.7 295.9L802.3 293.2ZM806.7 276.1L809.4 275.6L808.5 278.2ZM826.0 295.0L828.9 295.7L826.8 297.8ZM798.3 287.3L797.4 284.4L800.4 285.0ZM812.9 296.7L815.4 295.0L815.5 298.0ZM845.9 298.9L842.8 298.1L845.1 295.9ZM861.2 298.6L857.5 299.3L858.8 295.7ZM855.4 280.7L860.0 281.8L856.8 285.1ZM847.1 279.1L844.3 275.7L848.6 275.0Z" fill="#8f9396"/>
</g>
<g fill="none" stroke="#73920a" stroke-width="1.1">
<path d="M721.5 298.5V174.5Q721.5 171.5 724.5 171.5H781.5Q784.5 171.5 784.5 174.5V223L781.7 225L756.3 229.3V298.5"/>
<path d="M721.5 298.5H694.5V334.3H775.3V298.5H756.3"/>
<circle cx="665.4" cy="371.4" r="10.2"/>
<path d="M675.6 371.4H906.8"/>
</g>
<g fill="none" stroke="#e9967a" stroke-width="1">
<path d="M721.5 162.5V171M784.6 162.8V172.4M721.5 166.3H784.6"/>
<path d="M783.6 171.7H796.8M793.7 171.7V238.7M782.3 225.5H796.8M776 229.5H796.8M784.6 224.2V249.7M793.4 232V239"/>
<path d="M712 245.8H744.3"/>
<path d="M756.3 229.5V251M756.3 229.5H784.6M756.3 246H784.6"/>
<path d="M674 298.4H692M674 334.3H692M677.8 298.4V334.3M687.5 321.7V334.3M683 321.7H700.7"/>
<path d="M694.5 308.5H775.3M721.5 298.5V312M756.4 301V312M775.3 298.5V312"/>
<path d="M694.4 337V354M775.3 337V354M694.4 349.5H775.3"/>
<path d="M790.9 334.4H882M877.6 269.8V334.4"/>
<path d="M857.5 281.2L860.5 279.6L862 283L865 281.4"/>
</g>
<path d="M722.5 165h2.4v1.3h-2.4zM780.8 165h2.4v1.3h-2.4zM792.6 173.5h2.2v3h-2.2zM792.6 221.5h2.2v3h-2.2zM792.6 231h2.2v2.6h-2.2zM715.5 246.3h2.4v1.3h-2.4zM736.6 246.3h2.4v1.3h-2.4zM757.5 244.6h2.4v1.3h-2.4zM696 348h2.6v3h-2.6zM771 348h2.6v3h-2.6zM696 307.2h2.4v1.3h-2.4zM716.5 307.2h2.4v1.3h-2.4zM723 307.2h2.4v1.3h-2.4zM752.5 307.2h2.4v1.3h-2.4zM758 307.2h2.4v1.3h-2.4zM771 307.2h2.4v1.3h-2.4zM676.8 300h1.3v2.4h-1.3zM676.8 330.5h1.3v2.4h-1.3zM686.5 323h1.3v2.4h-1.3zM686.5 330.5h1.3v2.4h-1.3zM876.8 272h1.3v3h-1.3zM876.8 330h1.3v3h-1.3z" fill="#e9967a"/>
<circle cx="708" cy="286.8" r="6.9" fill="none" stroke="#f08a8a" stroke-width="1.1"/>
<path d="M734.5 176V195M734.5 199V209M734.5 212V221.5M734.5 226V235M734.5 238.6V248.7M734.5 253.3V262.2M734.5 267.2V275.4M734.5 279.8V302M734.5 306.6V324.2M702 321.5H712M715.9 321.5H726M729.7 321.5H739.8M743.5 321.5H751M755 321.5H768.2" stroke="#ff9a00" stroke-width="1.1" fill="none"/>
<path d="M866.1 268.9L856 296.7" stroke="#8a8e92" stroke-width="0.9" fill="none"/>
<path d="M759.5 298.5V272.4H865.5M858 290.6H783.5L775.3 298.5" stroke="#0000ff" stroke-width="1.3" fill="none"/>
<path d="M757.8 273V298.3" stroke="#ff0000" stroke-width="1.8" fill="none"/>
<g fill="none" stroke="#ff0000" stroke-width="1.1">
<circle cx="739" cy="184.4" r="6"/><circle cx="775.9" cy="180.6" r="6"/><circle cx="739.2" cy="317.7" r="6"/>
<path d="M680 171.3H721"/>
<circle cx="676.5" cy="171.8" r="3"/><path d="M672 171.8H681M676.5 167.3V176.3"/>
<path d="M745.3 186L770.2 192.4H803.7"/>
<path d="M785.5 171Q789 166 795 165.4H803.7"/>
<path d="M782.5 180.2H803.7"/>
<path d="M735 217.3H803.7"/>
<path d="M757.5 272.5L786.7 248.4H793"/>
<path d="M796.8 272Q799.5 266 805.5 265H814.5"/>
<path d="M751.3 321.3L783.8 304.8H797.5"/>
<path d="M745 322.3L776 328.5H796"/>
</g>
<path d="M745 185.4L750.5 185.6L749.6 188.6ZM782 180.2L786.5 178.9V181.5ZM734.7 217.3L739.5 216V218.6ZM757.2 272.8L761.8 270.8L759.9 268.6ZM750.6 321.7L754 318.3L755.3 320.9ZM744.6 322.2L749.3 321.6L748.7 324.4ZM785 171.6L786.3 167.8L788.3 169.6ZM796.6 272.3L797 268.3L799.3 269.5ZM676.5 171.8V168.8A3 3 0 0 0 673.5 171.8ZM676.5 171.8V174.8A3 3 0 0 0 679.5 171.8Z" fill="#ff0000"/>
<path d="M737.0 182.5h4v4h-4zM773.9 178.6h4v4h-4zM736.8 255.0h4v4h-4zM703.8 315.6h4v4h-4zM737.0 315.5h4v4h-4zM764.0 315.1h4v4h-4z" fill="#ff00ff"/>
<text x="682.8" y="165.6" font-size="5.8" fill="#ff0000" stroke="#ff0000" stroke-width="0.4" textLength="32.2" lengthAdjust="spacingAndGlyphs">WALL HEIGHT</text>
<text x="682.8" y="171.2" font-size="5.8" fill="#ff0000" stroke="#ff0000" stroke-width="0.4" textLength="35.0" lengthAdjust="spacingAndGlyphs">AS PER PLAN.</text>
<text x="748" y="164.3" font-size="5.8" fill="#ff0000" stroke="#ff0000" stroke-width="0.4" textLength="9.0" lengthAdjust="spacingAndGlyphs">14&quot;</text>
<text x="806.3" y="167.4" font-size="5.8" fill="#ff0000" stroke="#ff0000" stroke-width="0.4" textLength="76.7" lengthAdjust="spacingAndGlyphs">3/4&quot; CHAMFER AT ALL EDGES.</text>
<text x="807.5" y="181.9" font-size="5.8" fill="#ff0000" stroke="#ff0000" stroke-width="0.4" textLength="65.5" lengthAdjust="spacingAndGlyphs">NO. 3 NOSING BAR CONT.</text>
<text x="806.9" y="193.2" font-size="5.8" fill="#ff0000" stroke="#ff0000" stroke-width="0.4" textLength="59.3" lengthAdjust="spacingAndGlyphs">3-NO. 3 HORIZ REBAR.</text>
<text x="807.5" y="218.1" font-size="5.8" fill="#ff0000" stroke="#ff0000" stroke-width="0.4" textLength="48.5" lengthAdjust="spacingAndGlyphs">NO. 3 VERT REBAR</text>
<text x="807.5" y="224" font-size="5.8" fill="#ff0000" stroke="#ff0000" stroke-width="0.4" textLength="30.5" lengthAdjust="spacingAndGlyphs">AT 32&quot; O.C.</text>
<text transform="translate(791.2 206.2) rotate(-90)" font-size="5.8" fill="#ff0000" stroke="#ff0000" stroke-width="0.4" textLength="8.6" lengthAdjust="spacingAndGlyphs">12&quot;</text>
<text transform="translate(791.6 237) rotate(-90)" font-size="5.8" fill="#ff0000" stroke="#ff0000" stroke-width="0.4" textLength="6.2" lengthAdjust="spacingAndGlyphs">3&quot;</text>
<text x="700.7" y="244" font-size="5.8" fill="#ff0000" stroke="#ff0000" stroke-width="0.4" textLength="18.3" lengthAdjust="spacingAndGlyphs">3&quot; CLR</text>
<text x="768.8" y="244" font-size="5.8" fill="#ff0000" stroke="#ff0000" stroke-width="0.4" textLength="5.1" lengthAdjust="spacingAndGlyphs">6&quot;</text>
<text x="672" y="257.9" font-size="5.8" fill="#ff0000" stroke="#ff0000" stroke-width="0.4" textLength="33.8" lengthAdjust="spacingAndGlyphs">BACKFILL AND</text>
<text x="672" y="263.4" font-size="5.8" fill="#ff0000" stroke="#ff0000" stroke-width="0.4" textLength="40.7" lengthAdjust="spacingAndGlyphs">DRAIN PIPING AS</text>
<text x="672" y="269.1" font-size="5.8" fill="#ff0000" stroke="#ff0000" stroke-width="0.4" textLength="27.5" lengthAdjust="spacingAndGlyphs">NOTED PER</text>
<text x="672" y="274.5" font-size="5.8" fill="#ff0000" stroke="#ff0000" stroke-width="0.4" textLength="38.2" lengthAdjust="spacingAndGlyphs">DETAIL X/XXXX.</text>
<text x="794.3" y="250.6" font-size="5.8" fill="#ff0000" stroke="#ff0000" stroke-width="0.4" textLength="87.6" lengthAdjust="spacingAndGlyphs">1/2&quot; THICK FELT EXPANSION JOINT</text>
<text x="794.3" y="256.1" font-size="5.8" fill="#ff0000" stroke="#ff0000" stroke-width="0.4" textLength="87.6" lengthAdjust="spacingAndGlyphs">WITH BREAKAWAY TAB. CAULK WITH</text>
<text x="794.3" y="261.2" font-size="5.8" fill="#ff0000" stroke="#ff0000" stroke-width="0.4" textLength="36.6" lengthAdjust="spacingAndGlyphs">GREY SEALANT.</text>
<text x="816.1" y="268.3" font-size="5.8" fill="#ff0000" stroke="#ff0000" stroke-width="0.4" textLength="57.6" lengthAdjust="spacingAndGlyphs">FIN. SLAB AS OCCURS.</text>
<text x="800.8" y="306.9" font-size="5.8" fill="#ff0000" stroke="#ff0000" stroke-width="0.4" textLength="51.5" lengthAdjust="spacingAndGlyphs">NO. 3 REBAR TIE AT</text>
<text x="800" y="312.2" font-size="5.8" fill="#ff0000" stroke="#ff0000" stroke-width="0.4" textLength="21.6" lengthAdjust="spacingAndGlyphs">32&quot; O.C.</text>
<text x="800.2" y="329.4" font-size="5.8" fill="#ff0000" stroke="#ff0000" stroke-width="0.4" textLength="58.4" lengthAdjust="spacingAndGlyphs">3-NO. 3 REBAR CONT.</text>
<text transform="translate(868.8 331) rotate(-90)" font-size="5.8" fill="#ff0000" stroke="#ff0000" stroke-width="0.4" textLength="41.4" lengthAdjust="spacingAndGlyphs">14&quot; MIN. BELOW</text>
<text transform="translate(874.0 331) rotate(-90)" font-size="5.8" fill="#ff0000" stroke="#ff0000" stroke-width="0.4" textLength="41.4" lengthAdjust="spacingAndGlyphs">NATURAL GRADE.</text>
<text x="705.8" y="306" font-size="5.8" fill="#ff0000" stroke="#ff0000" stroke-width="0.4" textLength="5.0" lengthAdjust="spacingAndGlyphs">6&quot;</text>
<text x="736" y="306" font-size="5.8" fill="#ff0000" stroke="#ff0000" stroke-width="0.4" textLength="5.7" lengthAdjust="spacingAndGlyphs">8&quot;</text>
<text x="764" y="305.6" font-size="5.8" fill="#ff0000" stroke="#ff0000" stroke-width="0.4" textLength="5.6" lengthAdjust="spacingAndGlyphs">4&quot;</text>
<text transform="translate(675.6 318.8) rotate(-90)" font-size="5.8" fill="#ff0000" stroke="#ff0000" stroke-width="0.4" textLength="6.0" lengthAdjust="spacingAndGlyphs">9&quot;</text>
<text transform="translate(685.2 320) rotate(-90)" font-size="5.8" fill="#ff0000" stroke="#ff0000" stroke-width="0.4" textLength="8.8" lengthAdjust="spacingAndGlyphs">CLR</text>
<text transform="translate(685.2 328.2) rotate(-90)" font-size="5.8" fill="#ff0000" stroke="#ff0000" stroke-width="0.4" textLength="5.4" lengthAdjust="spacingAndGlyphs">3&quot;</text>
<text x="724.7" y="347.8" font-size="5.8" fill="#ff0000" stroke="#ff0000" stroke-width="0.4" textLength="13.9" lengthAdjust="spacingAndGlyphs">1'-6&quot;</text>
<text x="665.4" y="375.4" font-size="11.2" font-weight="bold" fill="#ff0000" text-anchor="middle" textLength="13.4" lengthAdjust="spacingAndGlyphs">00</text>
<text x="682.2" y="368.9" font-size="9.3" fill="#ff0000" stroke="#ff0000" stroke-width="0.25" textLength="149.3" lengthAdjust="spacingAndGlyphs" font-weight="bold">CONCRETE SEAT RETAINING WALL</text>
<text x="682.8" y="379.3" font-size="6" fill="#7cf5c0" stroke="#7cf5c0" stroke-width="0.15" textLength="41.9" lengthAdjust="spacingAndGlyphs">1 1/2&quot; = 1'-0&quot;</text>
<text x="872.8" y="379.8" font-size="6.4" fill="#7cf5c0" stroke="#7cf5c0" stroke-width="0.15" textLength="29.3" lengthAdjust="spacingAndGlyphs">DETAIL-FILE</text>
</svg>
<!--/CAD-->
</body></html>
